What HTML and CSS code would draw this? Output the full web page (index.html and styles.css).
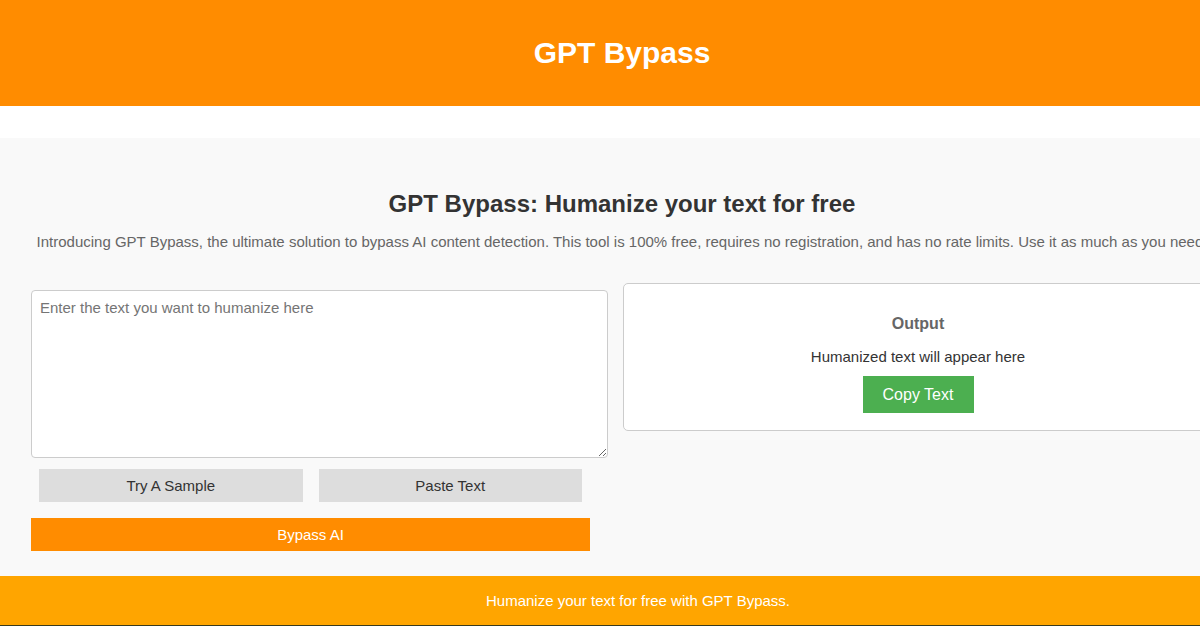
FILE: index.html
```html
<!DOCTYPE html>
<html lang="en">
<head>
<meta charset="utf-8">
<title>GPT Bypass</title>
<link rel="stylesheet" href="styles.css">
</head>
<body>
<div class="page">
  <header class="site-header">
    <h1>GPT Bypass</h1>
  </header>
  <main class="tool">
    <h2 class="tool-title">GPT Bypass: Humanize your text for free</h2>
    <p class="intro">Introducing GPT Bypass, the ultimate solution to bypass AI content detection. This tool is 100% free, requires no registration, and has no rate limits. Use it as much as you need.</p>
    <div class="workspace">
      <div class="input-col">
        <textarea class="input-text" placeholder="Enter the text you want to humanize here"></textarea>
        <div class="actions">
          <button class="btn-secondary" type="button">Try A Sample</button>
          <button class="btn-secondary" type="button">Paste Text</button>
        </div>
        <button class="btn-bypass" type="button">Bypass AI</button>
      </div>
      <div class="output-col">
        <div class="output-box">
          <h3 class="output-title">Output</h3>
          <p class="output-text">Humanized text will appear here</p>
          <button class="btn-copy" type="button">Copy Text</button>
        </div>
      </div>
    </div>
  </main>
  <footer class="site-footer">
    <p>Humanize your text for free with GPT Bypass.</p>
  </footer>
</div>
</body>
</html>
```

FILE: styles.css
```css
html, body {
  margin: 0;
  padding: 0;
  overflow: hidden;
  background: #ffffff;
}

body {
  font-family: "Liberation Sans", Arial, sans-serif;
  color: #333333;
}

.page {
  width: 1244px;
}

.site-header {
  background: #ff8c00;
  height: 106px;
  display: flex;
  align-items: center;
  justify-content: center;
}

.site-header h1 {
  margin: 0;
  color: #ffffff;
  font-size: 30px;
  font-weight: bold;
  line-height: 34px;
}

.tool {
  margin-top: 32px;
  background: #f9f9f9;
  padding: 52px 31px 25px;
}

.tool-title {
  margin: 0;
  text-align: center;
  font-size: 24px;
  line-height: 28px;
  font-weight: bold;
  color: #333333;
}

.intro {
  margin: 15px 0 0;
  text-align: center;
  white-space: nowrap;
  font-size: 15px;
  line-height: 18px;
  color: #666666;
}

.workspace {
  display: flex;
  align-items: flex-start;
  gap: 2px;
  margin-top: 32px;
}

.input-col {
  width: 590px;
  flex: none;
}

.input-text {
  display: block;
  box-sizing: content-box;
  width: 559px;
  height: 150px;
  margin: 7px 0 0;
  padding: 8px;
  border: 1px solid #cccccc;
  border-radius: 4px;
  background: #ffffff;
  font-family: "Liberation Sans", Arial, sans-serif;
  font-size: 15px;
  line-height: 17px;
  color: #333333;
  resize: vertical;
}

.input-text::placeholder {
  color: #757575;
}

.actions {
  display: flex;
  width: 559px;
  margin-top: 11px;
}

.btn-secondary {
  flex: 1;
  margin: 0 8px;
  height: 33px;
  border: none;
  border-radius: 0;
  background: #dddddd;
  color: #333333;
  font-family: "Liberation Sans", Arial, sans-serif;
  font-size: 15px;
  padding: 0;
}

.btn-bypass {
  display: block;
  width: 559px;
  height: 33px;
  margin-top: 16px;
  border: none;
  border-radius: 0;
  background: #ff8c00;
  color: #ffffff;
  font-family: "Liberation Sans", Arial, sans-serif;
  font-size: 15px;
  padding: 0;
}

.output-col {
  width: 590px;
  flex: none;
}

.output-box {
  box-sizing: border-box;
  height: 148px;
  border: 1px solid #cccccc;
  border-radius: 5px;
  background: #ffffff;
  padding: 20px 20px 17px;
  text-align: center;
}

.output-title {
  margin: 10px 0 0;
  font-size: 16px;
  line-height: 19px;
  font-weight: bold;
  color: #666666;
}

.output-text {
  margin: 15px 0 0;
  font-size: 15px;
  line-height: 18px;
  color: #333333;
}

.btn-copy {
  margin-top: 10px;
  width: 111px;
  height: 37px;
  border: none;
  border-radius: 0;
  background: #4caf50;
  color: #ffffff;
  font-family: "Liberation Sans", Arial, sans-serif;
  font-size: 16px;
  padding: 0;
}

.site-footer {
  background: #ffa500;
  height: 49px;
  border-bottom: 1px solid #3a3a1c;
  padding-left: 32px;
  display: flex;
  align-items: center;
  justify-content: center;
}

.site-footer p {
  margin: 0;
  color: #ffffff;
  font-size: 15px;
  line-height: 18px;
}
```
